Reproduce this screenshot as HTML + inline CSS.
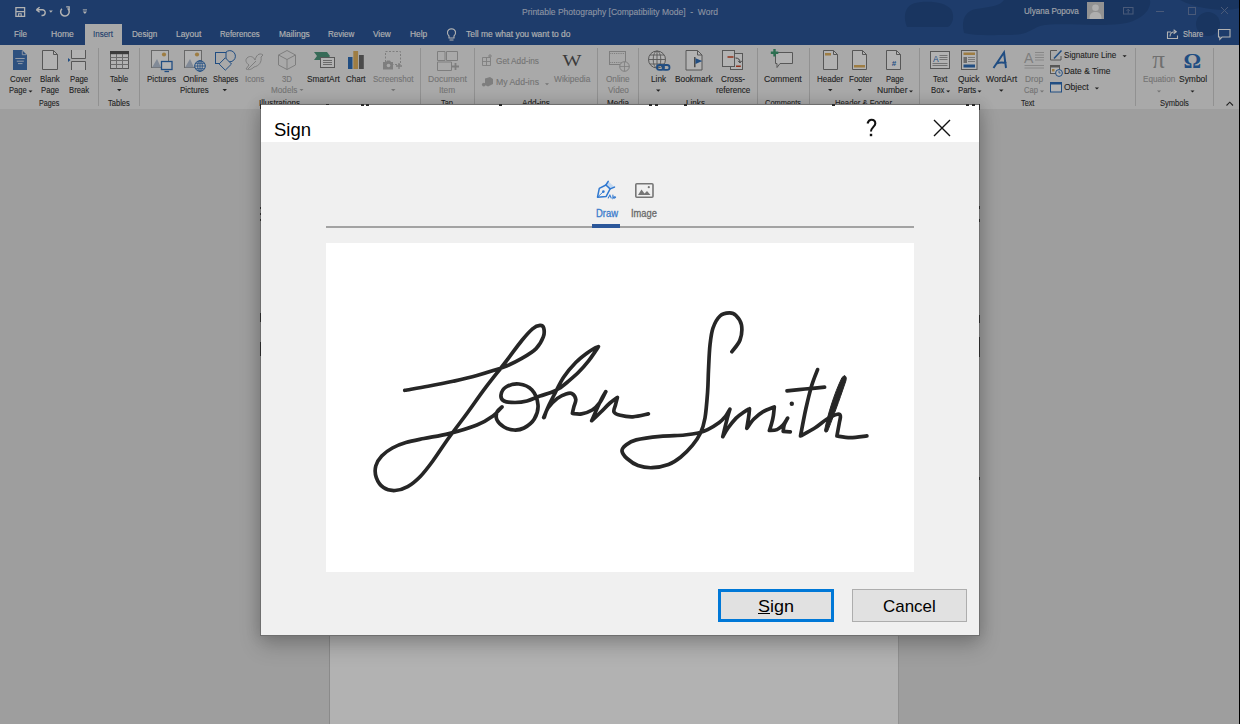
<!DOCTYPE html>
<html><head><meta charset="utf-8">
<style>
html,body{margin:0;padding:0;}
body{width:1240px;height:724px;overflow:hidden;position:relative;font-family:"Liberation Sans",sans-serif;background:#e6e6e6;}
.t{position:absolute;white-space:pre;transform-origin:0 0;}
.app .t{-webkit-text-stroke:0.1px currentColor;}
.mk{position:absolute;background:#2a2a2a;}
.a{position:absolute;}
#titlebar{position:absolute;left:0;top:0;width:1240px;height:45px;background:#2b579a;overflow:hidden;}
#ribbon{position:absolute;left:0;top:45px;width:1240px;height:64px;background:#f3f3f3;}
#tabsel{position:absolute;left:85px;top:24px;width:37px;height:21px;background:#f3f3f3;}
.sep{position:absolute;top:48px;width:1px;height:58px;background:#d0d0d0;}
#doc{position:absolute;left:0;top:109px;width:1240px;height:615px;background:#e3e3e3;}
#page{position:absolute;left:329px;top:109px;width:568px;height:615px;background:#ffffff;border-left:1px solid #c6c6c6;border-right:1px solid #d0d0d0;}
#dim{position:absolute;left:0;top:0;width:1240px;height:724px;background:rgba(0,0,0,0.3);}
#dlg{position:absolute;left:260px;top:104px;width:718px;height:530px;border:1px solid #6f6f6f;background:#f0f0f0;box-shadow:0 0 14px rgba(0,0,0,0.16), 0 10px 20px rgba(0,0,0,0.2);}
#dlgtitle{position:absolute;left:0;top:0;width:718px;height:37px;background:#ffffff;}
.tri{position:absolute;width:0;height:0;border-left:2.5px solid transparent;border-right:2.5px solid transparent;border-top:3px solid #444;}
</style></head><body>
<div id="doc"></div>
<div id="page"></div>
<div id="titlebar">
<svg class="a" style="left:0;top:0" width="1240" height="45" viewBox="0 0 1240 45"><g fill="rgba(0,12,40,0.14)"><path d="M907 27 C903 18 904 6 915 3 C928 0 945 2 951 9 C955 16 953 24 948 27z"/><path d="M964 33 C961 22 964 11 976 9 C990 7 1000 6 1004 0 H1150 C1152 10 1140 22 1120 24 C1090 27 1060 22 1040 26 C1030 30 1027 35 1010 35 C990 35 975 36 964 33z"/><circle cx="1208" cy="24" r="12"/><path d="M1180 0 H1240 V8 C1225 12 1200 10 1180 0z"/></g></svg>
</div>
<div id="tabsel"></div>
<div id="ribbon"></div>
<div class="sep" style="left:98px"></div><div class="sep" style="left:139px"></div><div class="sep" style="left:420px"></div><div class="sep" style="left:474px"></div><div class="sep" style="left:597px"></div><div class="sep" style="left:638px"></div><div class="sep" style="left:757px"></div><div class="sep" style="left:809px"></div><div class="sep" style="left:919px"></div><div class="sep" style="left:1135px"></div><div class="sep" style="left:1213px"></div><svg class="a" style="left:0;top:0" width="1240" height="120" viewBox="0 0 1240 120"><path d="M15.9 7.6 H24.6 V16.4 H15.9z M15.9 11.6 H24.6" fill="none" stroke="#ffffff" stroke-width="1.3"/><path d="M18.6 16.4 V13.8 H21.2 V16.4" fill="none" stroke="#ffffff" stroke-width="1.1"/><path d="M36.3 9.7 L39.6 7.2 M36.3 9.7 L39.6 12.3 M36.3 9.7 H42.3 A2.9 2.9 0 0 1 42.3 15.5 H41.5" fill="none" stroke="#ffffff" stroke-width="1.4"/><path d="M49 10.6 h3.8 l-1.9 2.2z" fill="#ffffff"/><path d="M67.6 8.4 A4.3 4.3 0 1 1 61.9 8.7" fill="none" stroke="#ffffff" stroke-width="1.5"/><path d="M66.2 6.8 H69.2 V10.2" fill="none" stroke="#ffffff" stroke-width="1.2"/><path d="M82.8 9.9 h4.2" stroke="#ffffff" stroke-width="1"/><path d="M82.8 11.6 h4.2 l-2.1 2.3z" fill="#ffffff"/><rect x="1087" y="2" width="17" height="17" fill="#d2d2d2"/><circle cx="1095.5" cy="7.8" r="3.3" fill="#fbfbfb"/><path d="M1089.5 19 C1089.5 13.5 1092 12 1095.5 12 C1099 12 1101.5 13.5 1101.5 19z" fill="#fbfbfb"/><rect x="1123.5" y="7.5" width="9.5" height="6.5" fill="none" stroke="#6a82ae" stroke-width="1"/><path d="M1128.2 13.5 v-4 M1126.6 10.8 l1.6 -1.6 l1.6 1.6" fill="none" stroke="#6a82ae" stroke-width="1"/><path d="M1156 11.5 h8" stroke="#6a82ae" stroke-width="1"/><rect x="1188.5" y="7.5" width="7" height="7" fill="none" stroke="#6a82ae" stroke-width="1"/><path d="M1221 7 L1228 14 M1228 7 L1221 14" stroke="#6a82ae" stroke-width="1"/><path d="M1171 32 H1167.5 V38.5 H1177.5 V35.5" fill="none" stroke="#ffffff" stroke-width="1.1"/><path d="M1170 36.5 C1170 33 1172 31.8 1175.5 31.8 M1173.6 29.8 L1176.3 31.8 L1173.6 33.9" fill="none" stroke="#ffffff" stroke-width="1.1"/><path d="M1218.5 29.5 H1230 V37 H1222 L1219.8 39.3 V37 H1218.5z" fill="none" stroke="#ffffff" stroke-width="1.1"/><path d="M449 36 C446.5 33.5 446.8 29 451.5 28.7 C456.2 29 456.5 33.5 454 36 V38 H449z M449.5 40 h4" fill="none" stroke="#ffffff" stroke-width="1.1"/><path d="M13 50 H22 L27 55 V70 H13z" fill="#4375b6"/><path d="M22.3 50.8 V54.7 H26.2" fill="none" stroke="#d6e0ee" stroke-width="0.9"/><path d="M15.3 58.5 h9.4 M16.8 61.2 h7 M18 63.6 h4.5" stroke="#e3ebf6" stroke-width="0.9"/><path d="M42.5 50.5 H53.5 L57.5 54.5 V69.5 H42.5z" fill="#fff" stroke="#7d7d7d" stroke-width="1"/><path d="M53.5 50.5 V54.5 H57.5" fill="none" stroke="#7d7d7d" stroke-width="1"/><path d="M71.5 50 V58.5 H85.5 V50 M71.5 70 V61.5 H85.5 V70" fill="#fff" stroke="#7d7d7d" stroke-width="1"/><path d="M68 58 L70.5 60 L68 62z" fill="#2f6fba"/><rect x="110.5" y="51.5" width="18" height="17" fill="#fff" stroke="#7d7d7d" stroke-width="1"/><rect x="110" y="51" width="19" height="3.2" fill="#555"/><path d="M110.5 57.5 h18 M110.5 60.5 h18 M110.5 64.5 h18 M116.5 54 v14.5 M122.5 54 v14.5" stroke="#9a9a9a" stroke-width="1"/><path d="M117 89 h4.5 l-2.25 2.2z" fill="#303030"/><rect x="151.5" y="50.5" width="17" height="17" fill="#fff" stroke="#959595" stroke-width="1"/><circle cx="164" cy="54.5" r="2.1" fill="#e3b461"/><path d="M152 67.5 L157 59 L161 67.5z" fill="#b9c6d8"/><rect x="161.5" y="61.5" width="10.5" height="8" fill="#fff" stroke="#2f6fba" stroke-width="1.3"/><path d="M164.5 71.5 h4.5" stroke="#2f6fba" stroke-width="1.3"/><rect x="184.5" y="50.5" width="17" height="17" fill="#fff" stroke="#959595" stroke-width="1"/><circle cx="197" cy="54.5" r="2.1" fill="#e3b461"/><path d="M185 67.5 L190 59 L194 67.5z" fill="#b9c6d8"/><circle cx="200" cy="66" r="5.3" fill="#fff" stroke="#2f6fba" stroke-width="1"/><path d="M194.7 66 h10.6 M200 60.7 v10.6 M195.5 63.3 h9 M195.5 68.7 h9" stroke="#2f6fba" stroke-width="0.8" fill="none"/><ellipse cx="200" cy="66" rx="2.3" ry="5.3" fill="none" stroke="#2f6fba" stroke-width="0.8"/><circle cx="229.8" cy="56.2" r="5.6" fill="none" stroke="#2f6fba" stroke-width="1"/><rect x="215.5" y="52.5" width="10.5" height="11" fill="#f3f3f3" stroke="#2f6fba" stroke-width="1"/><path d="M225.3 57.8 L231.5 64 L225.3 70.2 L219.1 64z" fill="#f3f3f3" stroke="#2f6fba" stroke-width="1"/><path d="M222.5 89 h4.5 l-2.25 2.2z" fill="#303030"/><path d="M247 58 C250 55 254 57 255 60 C256 56 259 52 263 55 L261 57 C262 62 259 66 254 67 C251 70 248 70 246 69 L249 65 C246 63 245 60 247 58z" fill="none" stroke="#b5b5b5" stroke-width="1"/><path d="M248 69 L256 61" stroke="#b5b5b5" stroke-width="1"/><path d="M287 50.5 L295.5 55 V65 L287 69.5 L278.5 65 V55z M278.5 55 L287 59.5 L295.5 55 M287 59.5 V69.5" fill="none" stroke="#b5b5b5" stroke-width="1"/><path d="M299.5 89 h4 l-2 2z" fill="#a6a6a6"/><path d="M314 52 H327 L330 56 L327 60 H314 L317 56z" fill="#4f9a7e"/><rect x="320.5" y="57.5" width="14" height="10" fill="#fff" stroke="#7d7d7d" stroke-width="1"/><path d="M323 60.5 h9 M323 62.5 h9 M323 64.5 h9" stroke="#7d7d7d" stroke-width="0.8"/><rect x="348" y="57" width="4.5" height="12" fill="#2f6fba"/><rect x="353.3" y="51" width="4.8" height="18" fill="#e3b461"/><rect x="359" y="55" width="4.8" height="14" fill="#6b6b6b"/><rect x="385.5" y="51.5" width="15" height="13" fill="none" stroke="#b5b5b5" stroke-width="1" stroke-dasharray="2 1.5"/><path d="M383 62 h3 l1-1.5 h3 l1 1.5 h2 v7.5 h-10z" fill="#b5b5b5"/><circle cx="388.5" cy="65.5" r="1.8" fill="#f3f3f3"/><path d="M396 66 h6 M399 63 v6" stroke="#b5b5b5" stroke-width="1.3"/><path d="M391 89 h4.5 l-2.25 2.2z" fill="#a6a6a6"/><path d="M437.5 51.5 h7.5 v9 h-7.5z M446.5 51.5 h11 v9 h-11z M437.5 62 h14 v8.5 h-14z" fill="none" stroke="#b5b5b5" stroke-width="1"/><path d="M452 66.5 h7 M455.5 63 v7" stroke="#b5b5b5" stroke-width="1.8"/><path d="M482.5 57.5 h8 v8 h-8z M486.5 57.5 v8 M482.5 61.5 h8" fill="none" stroke="#b5b5b5" stroke-width="0.9"/><path d="M490 54 v4 M488 56 h4" stroke="#b5b5b5" stroke-width="0.9"/><path d="M485 78.5 L490 77 L493 79 V84 L488 86.5 L485 85z" fill="#b5b5b5"/><circle cx="483.8" cy="84.6" r="1.9" fill="#b5b5b5"/><path d="M545 83.2 h4 l-2 2z" fill="#a6a6a6"/><text x="572" y="66" font-family="Liberation Serif" font-size="17" fill="#555" text-anchor="middle" transform="translate(572 0) scale(1.18 1) translate(-572 0)">W</text><rect x="609.5" y="51.5" width="16" height="13" fill="none" stroke="#b5b5b5" stroke-width="1"/><path d="M609.5 53.5 h16 M609.5 62.5 h16" stroke="#b5b5b5" stroke-width="1" stroke-dasharray="1.2 1"/><circle cx="624.5" cy="66.5" r="4.8" fill="#f3f3f3" stroke="#b5b5b5" stroke-width="1"/><path d="M619.7 66.5 h9.6 M624.5 61.7 v9.6" stroke="#b5b5b5" stroke-width="0.8"/><circle cx="657" cy="59.5" r="8.5" fill="#fff" stroke="#7d7d7d" stroke-width="1"/><ellipse cx="657" cy="59.5" rx="3.8" ry="8.5" fill="none" stroke="#7d7d7d" stroke-width="0.9"/><path d="M648.5 59.5 h17 M650 55 h14 M650 64 h14 M657 51 v17" stroke="#7d7d7d" stroke-width="0.9"/><rect x="657" y="65" width="7" height="4.8" rx="2.4" fill="none" stroke="#2f6fba" stroke-width="1.8"/><rect x="662.5" y="65" width="7" height="4.8" rx="2.4" fill="none" stroke="#2f6fba" stroke-width="1.8"/><path d="M656 89.5 h4.5 l-2.25 2.2z" fill="#303030"/><path d="M686 50.5 H697.5 L702 55 V70 H686z" fill="#fff" stroke="#7d7d7d" stroke-width="1"/><path d="M697.5 50.5 V55 H702" fill="none" stroke="#7d7d7d" stroke-width="1"/><path d="M694.8 57 V67.3" stroke="#555" stroke-width="1.3"/><path d="M695.5 58.2 L702.3 61.1 L695.5 64z" fill="#2f6fba"/><rect x="730.5" y="53.5" width="12" height="16" fill="#fff" stroke="#7d7d7d" stroke-width="1"/><rect x="722.5" y="50.5" width="12" height="16" fill="#fff" stroke="#7d7d7d" stroke-width="1"/><path d="M727.5 57 h6 M736 66.2 h4.8" stroke="#d24726" stroke-width="1.6"/><path d="M735.5 58 C738.5 58 740 59.5 740 62.5 M738.2 60.8 L740 62.8 L741.8 60.8" fill="none" stroke="#555" stroke-width="1"/><path d="M775.5 52.5 H792.5 V63.5 H780 L777 67.5 V63.5 H775.5z" fill="#fff" stroke="#7d7d7d" stroke-width="1"/><path d="M774.5 49 v7.5 M770.8 52.7 h7.5" stroke="#3f9f74" stroke-width="2.4"/><path d="M823.5 50.5 H833.5 L837.5 54.5 V69.5 H823.5z" fill="#fff" stroke="#7d7d7d" stroke-width="1"/><path d="M833.5 50.5 V54.5 H837.5" fill="none" stroke="#7d7d7d" stroke-width="1"/><rect x="825" y="53" width="6" height="2.5" fill="#e3b461"/><path d="M828 89 h4.5 l-2.25 2.2z" fill="#303030"/><path d="M852.5 50.5 H862.5 L866.5 54.5 V69.5 H852.5z" fill="#fff" stroke="#7d7d7d" stroke-width="1"/><path d="M862.5 50.5 V54.5 H866.5" fill="none" stroke="#7d7d7d" stroke-width="1"/><rect x="854" y="65" width="11" height="2.5" fill="#e3b461"/><path d="M857.5 89 h4.5 l-2.25 2.2z" fill="#303030"/><path d="M886.5 50.5 H896.5 L900.5 54.5 V69.5 H886.5z" fill="#fff" stroke="#7d7d7d" stroke-width="1"/><path d="M896.5 50.5 V54.5 H900.5" fill="none" stroke="#7d7d7d" stroke-width="1"/><text x="894" y="66" font-family="Liberation Sans" font-size="8" font-weight="bold" fill="#2f6fba" text-anchor="middle">#</text><path d="M909 90.5 h4 l-2 2z" fill="#303030"/><rect x="930.5" y="51.5" width="19" height="17" fill="#fff" stroke="#7d7d7d" stroke-width="1"/><text x="933" y="61.5" font-family="Liberation Sans" font-size="8.5" fill="#2f6fba">A</text><path d="M939.5 55.5 h8 M939.5 57.5 h8 M939.5 59.5 h8 M932.5 63.5 h15 M932.5 65.5 h15" stroke="#7d7d7d" stroke-width="0.7"/><path d="M946.2 90.5 h4 l-2 2z" fill="#303030"/><rect x="961.5" y="50.5" width="15.5" height="19" fill="#fff" stroke="#7d7d7d" stroke-width="1"/><rect x="963.5" y="52.5" width="11.5" height="2.5" fill="#e3b461"/><rect x="963.5" y="57" width="3.5" height="6" fill="#9a9a9a"/><path d="M968 57.5 h7 M968 59.5 h7 M968 61.5 h7" stroke="#9a9a9a" stroke-width="0.8"/><rect x="963.5" y="64.5" width="11.5" height="3" fill="#2f6fba"/><path d="M977.5 90.5 h4 l-2 2z" fill="#303030"/><path d="M993.5 68 L1004 52.5 L1006 68 M996.5 63.5 C1000 62 1003 62.5 1006.5 63" fill="none" stroke="#2f6fba" stroke-width="2"/><path d="M999 89.5 h4.5 l-2.25 2.2z" fill="#303030"/><text x="1024" y="63" font-family="Liberation Sans" font-size="14" fill="#b5b5b5">A</text><path d="M1035 52.5 h9 M1035 55 h9 M1035 57.5 h9 M1035 60 h9 M1024.5 65.5 h19.5 M1024.5 68 h19.5" stroke="#b5b5b5" stroke-width="0.8"/><path d="M1040 90.5 h4 l-2 2z" fill="#a6a6a6"/><path d="M1050.5 50.5 H1057 M1050.5 50.5 V60 H1061 V56" fill="none" stroke="#7d7d7d" stroke-width="1"/><path d="M1054 58.5 L1061.5 50.5" stroke="#2f6fba" stroke-width="1.6"/><path d="M1122.5 55.2 h4.2 l-2.1 2.1z" fill="#303030"/><rect x="1050.5" y="65.5" width="9" height="8" fill="#fff" stroke="#7d7d7d" stroke-width="1"/><rect x="1050.5" y="65.5" width="9" height="2" fill="#7d7d7d"/><rect x="1052" y="69" width="2.5" height="2.5" fill="#e3b461"/><circle cx="1059" cy="73" r="3.4" fill="#fff" stroke="#2f6fba" stroke-width="1"/><path d="M1059 71 v2 h1.6" fill="none" stroke="#2f6fba" stroke-width="0.8"/><rect x="1050.5" y="82.5" width="11" height="9.5" fill="#fff" stroke="#2f6fba" stroke-width="1"/><rect x="1050.5" y="82.5" width="11" height="2" fill="#2f6fba"/><path d="M1094.8 87.5 h4.2 l-2.1 2.1z" fill="#303030"/><text x="1158.5" y="68" font-family="Liberation Serif" font-size="25" fill="#a0a0a0" text-anchor="middle">π</text><text x="1192.3" y="68" font-family="Liberation Serif" font-size="22" font-weight="bold" fill="#2f6fba" text-anchor="middle">Ω</text><path d="M1157 90.5 h4 l-2 2z" fill="#a6a6a6"/><path d="M1190.5 90.5 h4 l-2 2z" fill="#303030"/><path d="M1226.5 105.5 L1229.8 102.2 L1233 105.5" fill="none" stroke="#303030" stroke-width="1.1"/><path d="M28.5 90.5 h4 l-2 2z" fill="#303030"/></svg>
<div class="app"><div class="t" style="left:521.5px;top:7.68px;font-size:9px;line-height:9px;color:#c9d3e6;transform:scaleX(0.945);">Printable Photography [Compatibility Mode]  -  Word</div>
<div class="t" style="left:1024.2px;top:6.68px;font-size:9px;line-height:9px;color:#e8ecf4;transform:scaleX(0.898);">Ulyana Popova</div>
<div class="t" style="left:14.2px;top:30.10px;font-size:8.5px;line-height:8.5px;color:#ffffff;transform:scaleX(0.941);">File</div>
<div class="t" style="left:51.4px;top:30.10px;font-size:8.5px;line-height:8.5px;color:#ffffff;transform:scaleX(1.005);">Home</div>
<div class="t" style="left:92.9px;top:30.10px;font-size:8.5px;line-height:8.5px;color:#2b579a;transform:scaleX(0.940);">Insert</div>
<div class="t" style="left:131.9px;top:30.10px;font-size:8.5px;line-height:8.5px;color:#ffffff;transform:scaleX(0.956);">Design</div>
<div class="t" style="left:175.8px;top:30.10px;font-size:8.5px;line-height:8.5px;color:#ffffff;transform:scaleX(0.991);">Layout</div>
<div class="t" style="left:220.0px;top:30.10px;font-size:8.5px;line-height:8.5px;color:#ffffff;transform:scaleX(0.911);">References</div>
<div class="t" style="left:278.9px;top:30.10px;font-size:8.5px;line-height:8.5px;color:#ffffff;transform:scaleX(0.988);">Mailings</div>
<div class="t" style="left:328.4px;top:30.10px;font-size:8.5px;line-height:8.5px;color:#ffffff;transform:scaleX(0.943);">Review</div>
<div class="t" style="left:373.0px;top:30.10px;font-size:8.5px;line-height:8.5px;color:#ffffff;transform:scaleX(0.974);">View</div>
<div class="t" style="left:409.7px;top:30.10px;font-size:8.5px;line-height:8.5px;color:#ffffff;transform:scaleX(0.989);">Help</div>
<div class="t" style="left:465.7px;top:30.10px;font-size:8.5px;line-height:8.5px;color:#ffffff;transform:scaleX(0.996);">Tell me what you want to do</div>
<div class="t" style="left:1183.0px;top:30.10px;font-size:8.5px;line-height:8.5px;color:#ffffff;transform:scaleX(0.890);">Share</div>
<div class="t" style="left:9.6px;top:74.94px;font-size:8.7px;line-height:8.7px;color:#303030;transform:scaleX(0.910);">Cover</div>
<div class="t" style="left:8.8px;top:85.94px;font-size:8.7px;line-height:8.7px;color:#303030;transform:scaleX(0.872);">Page</div>
<div class="t" style="left:39.5px;top:74.94px;font-size:8.7px;line-height:8.7px;color:#303030;transform:scaleX(0.911);">Blank</div>
<div class="t" style="left:40.6px;top:85.94px;font-size:8.7px;line-height:8.7px;color:#303030;transform:scaleX(0.892);">Page</div>
<div class="t" style="left:70.0px;top:74.94px;font-size:8.7px;line-height:8.7px;color:#303030;transform:scaleX(0.892);">Page</div>
<div class="t" style="left:68.9px;top:85.94px;font-size:8.7px;line-height:8.7px;color:#303030;transform:scaleX(0.885);">Break</div>
<div class="t" style="left:110.4px;top:74.94px;font-size:8.7px;line-height:8.7px;color:#303030;transform:scaleX(0.871);">Table</div>
<div class="t" style="left:39.0px;top:98.94px;font-size:8.7px;line-height:8.7px;color:#303030;transform:scaleX(0.824);">Pages</div>
<div class="t" style="left:107.8px;top:98.94px;font-size:8.7px;line-height:8.7px;color:#303030;transform:scaleX(0.868);">Tables</div>
<div class="t" style="left:146.8px;top:74.94px;font-size:8.7px;line-height:8.7px;color:#303030;transform:scaleX(0.924);">Pictures</div>
<div class="t" style="left:182.6px;top:74.94px;font-size:8.7px;line-height:8.7px;color:#303030;transform:scaleX(0.963);">Online</div>
<div class="t" style="left:179.7px;top:85.94px;font-size:8.7px;line-height:8.7px;color:#303030;transform:scaleX(0.917);">Pictures</div>
<div class="t" style="left:212.6px;top:74.94px;font-size:8.7px;line-height:8.7px;color:#303030;transform:scaleX(0.852);">Shapes</div>
<div class="t" style="left:244.8px;top:74.94px;font-size:8.7px;line-height:8.7px;color:#a6a6a6;transform:scaleX(0.934);">Icons</div>
<div class="t" style="left:282.0px;top:74.94px;font-size:8.7px;line-height:8.7px;color:#a6a6a6;transform:scaleX(0.900);">3D</div>
<div class="t" style="left:271.3px;top:85.94px;font-size:8.7px;line-height:8.7px;color:#a6a6a6;transform:scaleX(0.942);">Models</div>
<div class="t" style="left:307.0px;top:74.94px;font-size:8.7px;line-height:8.7px;color:#303030;transform:scaleX(0.954);">SmartArt</div>
<div class="t" style="left:346.4px;top:74.94px;font-size:8.7px;line-height:8.7px;color:#303030;transform:scaleX(0.922);">Chart</div>
<div class="t" style="left:372.6px;top:74.94px;font-size:8.7px;line-height:8.7px;color:#a6a6a6;transform:scaleX(0.919);">Screenshot</div>
<div class="t" style="left:259.0px;top:98.94px;font-size:8.7px;line-height:8.7px;color:#303030;transform:scaleX(0.933);">Illustrations</div>
<div class="t" style="left:428.0px;top:74.94px;font-size:8.7px;line-height:8.7px;color:#a6a6a6;transform:scaleX(0.980);">Document</div>
<div class="t" style="left:438.8px;top:85.94px;font-size:8.7px;line-height:8.7px;color:#a6a6a6;transform:scaleX(0.958);">Item</div>
<div class="t" style="left:441.0px;top:98.94px;font-size:8.7px;line-height:8.7px;color:#303030;transform:scaleX(0.856);">Tap</div>
<div class="t" style="left:496.0px;top:56.94px;font-size:8.7px;line-height:8.7px;color:#a6a6a6;transform:scaleX(0.947);">Get Add-ins</div>
<div class="t" style="left:496.0px;top:77.94px;font-size:8.7px;line-height:8.7px;color:#a6a6a6;transform:scaleX(1.000);">My Add-ins</div>
<div class="t" style="left:553.7px;top:74.94px;font-size:8.7px;line-height:8.7px;color:#a6a6a6;transform:scaleX(0.964);">Wikipedia</div>
<div class="t" style="left:522.0px;top:98.94px;font-size:8.7px;line-height:8.7px;color:#303030;transform:scaleX(0.950);">Add-ins</div>
<div class="t" style="left:606.0px;top:74.94px;font-size:8.7px;line-height:8.7px;color:#a6a6a6;transform:scaleX(0.943);">Online</div>
<div class="t" style="left:607.7px;top:85.94px;font-size:8.7px;line-height:8.7px;color:#a6a6a6;transform:scaleX(0.943);">Video</div>
<div class="t" style="left:607.0px;top:98.94px;font-size:8.7px;line-height:8.7px;color:#303030;transform:scaleX(0.929);">Media</div>
<div class="t" style="left:650.9px;top:74.94px;font-size:8.7px;line-height:8.7px;color:#303030;transform:scaleX(0.947);">Link</div>
<div class="t" style="left:674.6px;top:74.94px;font-size:8.7px;line-height:8.7px;color:#303030;transform:scaleX(0.961);">Bookmark</div>
<div class="t" style="left:721.0px;top:74.94px;font-size:8.7px;line-height:8.7px;color:#303030;transform:scaleX(0.938);">Cross-</div>
<div class="t" style="left:715.6px;top:85.94px;font-size:8.7px;line-height:8.7px;color:#303030;transform:scaleX(0.937);">reference</div>
<div class="t" style="left:686.0px;top:98.94px;font-size:8.7px;line-height:8.7px;color:#303030;transform:scaleX(0.937);">Links</div>
<div class="t" style="left:764.3px;top:74.94px;font-size:8.7px;line-height:8.7px;color:#303030;transform:scaleX(1.001);">Comment</div>
<div class="t" style="left:765.0px;top:98.94px;font-size:8.7px;line-height:8.7px;color:#303030;transform:scaleX(0.857);">Comments</div>
<div class="t" style="left:817.0px;top:74.94px;font-size:8.7px;line-height:8.7px;color:#303030;transform:scaleX(0.919);">Header</div>
<div class="t" style="left:848.8px;top:74.94px;font-size:8.7px;line-height:8.7px;color:#303030;transform:scaleX(0.924);">Footer</div>
<div class="t" style="left:885.5px;top:74.94px;font-size:8.7px;line-height:8.7px;color:#303030;transform:scaleX(0.877);">Page</div>
<div class="t" style="left:876.5px;top:85.94px;font-size:8.7px;line-height:8.7px;color:#303030;transform:scaleX(0.987);">Number</div>
<div class="t" style="left:835.0px;top:98.94px;font-size:8.7px;line-height:8.7px;color:#303030;transform:scaleX(0.887);">Header & Footer</div>
<div class="t" style="left:933.0px;top:74.94px;font-size:8.7px;line-height:8.7px;color:#303030;transform:scaleX(0.897);">Text</div>
<div class="t" style="left:930.7px;top:85.94px;font-size:8.7px;line-height:8.7px;color:#303030;transform:scaleX(0.888);">Box</div>
<div class="t" style="left:958.3px;top:74.94px;font-size:8.7px;line-height:8.7px;color:#303030;transform:scaleX(0.968);">Quick</div>
<div class="t" style="left:957.8px;top:85.94px;font-size:8.7px;line-height:8.7px;color:#303030;transform:scaleX(0.902);">Parts</div>
<div class="t" style="left:985.5px;top:74.94px;font-size:8.7px;line-height:8.7px;color:#303030;transform:scaleX(0.981);">WordArt</div>
<div class="t" style="left:1024.7px;top:74.94px;font-size:8.7px;line-height:8.7px;color:#a6a6a6;transform:scaleX(0.961);">Drop</div>
<div class="t" style="left:1023.9px;top:85.94px;font-size:8.7px;line-height:8.7px;color:#a6a6a6;transform:scaleX(0.872);">Cap</div>
<div class="t" style="left:1063.6px;top:50.94px;font-size:8.7px;line-height:8.7px;color:#303030;transform:scaleX(0.935);">Signature Line</div>
<div class="t" style="left:1063.6px;top:66.94px;font-size:8.7px;line-height:8.7px;color:#303030;transform:scaleX(0.970);">Date &amp; Time</div>
<div class="t" style="left:1063.6px;top:82.94px;font-size:8.7px;line-height:8.7px;color:#303030;transform:scaleX(0.980);">Object</div>
<div class="t" style="left:1020.6px;top:98.94px;font-size:8.7px;line-height:8.7px;color:#303030;transform:scaleX(0.841);">Text</div>
<div class="t" style="left:1142.8px;top:74.94px;font-size:8.7px;line-height:8.7px;color:#a6a6a6;transform:scaleX(0.939);">Equation</div>
<div class="t" style="left:1178.5px;top:74.94px;font-size:8.7px;line-height:8.7px;color:#303030;transform:scaleX(0.973);">Symbol</div>
<div class="t" style="left:1160.4px;top:98.94px;font-size:8.7px;line-height:8.7px;color:#303030;transform:scaleX(0.865);">Symbols</div></div>
<div id="dim"></div>
<div id="dlg"><div id="dlgtitle"></div></div>
<svg class="a" style="left:0;top:0" width="1240" height="724" viewBox="0 0 1240 724"><path d="M608.2 181.3 L614.5 187.1 L610.2 188.9 L605.9 185z" fill="#c3d8f0"/><path d="M608.2 181.3 L605.9 185 M614.5 187.1 L610.1 188.9" stroke="#2f78d0" stroke-width="1.5" stroke-linecap="round"/><path d="M605.9 185 L599.3 188.4 L597.5 197.2 L606.2 196.4 L610.1 188.9 Z" fill="none" stroke="#2f78d0" stroke-width="1.5" stroke-linejoin="round"/><path d="M598 196.7 L603.2 191.8" stroke="#2f78d0" stroke-width="0.9"/><circle cx="603.4" cy="191.6" r="1.3" fill="#2f78d0"/><path d="M608.2 198 L609.9 195.1 L611.2 198 M612.9 194.9 L612.9 198 C614 196.4 615.4 196.4 615.6 197.2 C615.4 198.2 614 198.3 613.2 197.8" fill="none" stroke="#2f78d0" stroke-width="1.05" stroke-linecap="round"/><rect x="635.8" y="183.8" width="17.2" height="13.4" rx="1" fill="none" stroke="#767676" stroke-width="1.6"/><path d="M638 195 L641.5 189.5 L644.5 193.5 L647 191 L650.5 195z" fill="#767676"/><circle cx="648.8" cy="187.2" r="1.1" fill="#767676"/></svg><div class="a" style="left:326px;top:226px;width:588px;height:2px;background:#a3a3a3"></div><div class="a" style="left:592px;top:224px;width:28px;height:4px;background:#2b579a"></div><div class="a" style="left:326px;top:243px;width:588px;height:329px;background:#ffffff"></div><div class="a" style="left:718px;top:589px;width:110px;height:27px;border:3px solid #0078d7;background:#e1e1e1"></div><div class="a" style="left:852px;top:589px;width:113px;height:31px;border:1px solid #adadad;background:#e1e1e1"></div><svg class="a" style="left:0;top:0" width="1240" height="724" viewBox="0 0 1240 724"><path d="M867.5 123.5 C868.5 120.5 870.5 119.8 871.5 119.8 C874 119.8 875.3 121.5 875.3 123.5 C875.3 126.5 871 127.5 871 131.5" fill="none" stroke="#111" stroke-width="2.1"/><rect x="869.8" y="133.8" width="2.4" height="2.4" fill="#111"/><path d="M934 120 L950 136 M950 120 L934 136" stroke="#111" stroke-width="1.4"/></svg>
<svg class="a" style="left:0;top:0" width="1240" height="724" viewBox="0 0 1240 724"><g fill="none" stroke="#262626" stroke-width="3.7" stroke-linecap="round" stroke-linejoin="round"><path d="M404.8 390.3 C408.7 389.6 420.0 387.8 428.0 386.3 C436.0 384.8 444.9 383.1 453.0 381.3 C461.1 379.5 468.4 377.9 476.9 375.5 C485.4 373.1 496.3 370.0 503.8 367.1 C511.3 364.2 516.4 361.5 521.8 358.4 C527.2 355.3 532.5 352.2 536.1 348.6 C539.7 345.0 542.0 340.3 543.3 336.9 C544.6 333.5 544.2 329.9 543.7 328.0 C543.2 326.1 541.9 325.2 540.0 325.3 C538.1 325.4 535.5 326.3 532.5 328.8 C529.5 331.3 526.3 335.0 521.8 340.5 C517.3 346.0 511.6 354.2 505.6 362.0 C499.6 369.8 492.2 378.9 485.9 387.2 C479.6 395.5 474.1 403.6 468.0 412.0 C461.9 420.4 454.9 429.3 449.0 437.5 C443.1 445.7 437.6 454.5 432.8 461.0 C428.0 467.5 424.5 472.2 420.3 476.5 C416.1 480.8 411.9 484.3 407.7 486.6 C403.5 488.9 399.1 490.3 395.1 490.5 C391.1 490.7 386.6 489.8 383.5 487.6 C380.4 485.5 377.6 481.2 376.3 477.6 C375.0 474.0 374.9 469.5 375.8 465.9 C376.7 462.3 378.9 459.0 381.7 456.0 C384.5 453.0 388.4 450.2 392.4 448.0 C396.4 445.8 400.6 444.2 405.9 442.6 C411.1 441.0 416.7 440.0 423.9 438.5 C431.1 437.0 440.2 435.9 449.0 433.6 C457.8 431.4 469.6 427.9 476.9 425.0 C484.2 422.1 488.8 418.9 493.0 415.9 C497.2 412.9 500.5 408.4 502.0 406.9 L502.0 406.9 C501.2 407.8 497.8 409.8 497.0 412.0 C496.2 414.2 495.8 417.5 497.0 420.0 C498.2 422.5 501.2 425.3 504.0 427.0 C506.8 428.7 510.7 429.8 514.0 430.0 C517.3 430.2 520.6 429.8 524.0 428.0 C527.4 426.2 532.0 422.8 534.3 419.0 C536.6 415.2 538.4 409.8 538.0 405.0 C537.6 400.2 535.2 393.5 532.0 390.0 C528.8 386.5 523.3 384.5 519.0 384.0 C514.7 383.5 509.0 385.2 506.0 387.0 C503.0 388.8 501.3 392.7 501.0 395.0 C500.7 397.3 501.7 399.8 504.0 401.0 C506.3 402.2 511.2 402.5 515.0 402.5 C518.8 402.5 522.8 402.1 527.0 401.0 C531.2 399.9 536.0 397.4 540.0 396.0 C544.0 394.6 547.8 393.8 551.0 392.5 C554.2 391.2 556.3 390.2 559.0 388.5 C561.7 386.8 564.0 384.9 567.3 382.2 C570.5 379.5 575.0 375.8 578.5 372.3 C582.0 368.8 585.6 364.6 588.4 361.1 C591.2 357.6 593.8 353.5 595.5 351.1 C597.2 348.7 597.9 347.4 598.4 346.6 L598.4 346.6 C597.7 346.9 595.9 347.4 594.0 348.5 C592.1 349.6 590.2 350.7 587.2 353.0 C584.2 355.3 579.9 358.3 576.0 362.3 C572.1 366.3 567.1 372.0 563.6 377.2 C560.1 382.4 557.3 388.8 554.9 393.4 C552.5 398.0 550.9 401.0 549.0 405.0 C547.1 409.0 544.6 415.5 543.7 417.6 L544.3 417.3 C544.9 415.8 545.8 411.1 548.0 408.0 C550.2 404.9 554.4 400.7 557.4 398.4 C560.4 396.1 563.6 394.8 566.0 394.0 C568.4 393.2 570.4 392.7 572.0 393.6 C573.6 394.5 575.5 397.1 575.8 399.4 C576.1 401.6 574.4 404.8 573.8 407.1 C573.2 409.4 572.6 412.3 572.4 413.4 L572.4 413.4 C573.9 413.5 578.3 414.5 581.6 413.9 C584.9 413.3 589.1 411.9 592.2 410.0 C595.3 408.1 597.7 405.4 600.0 402.3 C602.3 399.2 604.8 393.4 605.8 391.6 L605.8 391.6 C605.0 393.1 603.2 395.5 600.9 400.3 C598.5 405.1 593.2 417.3 591.7 420.7 L591.7 420.7 C593.2 419.2 597.9 414.9 600.9 412.0 C603.9 409.1 607.2 405.4 610.0 403.0 C612.8 400.6 616.2 398.3 617.4 397.4 L617.4 397.4 C617.1 398.7 616.0 402.8 615.4 405.2 C614.8 407.6 613.2 410.3 614.0 412.0 C614.8 413.7 617.1 414.5 620.3 415.3 C623.4 416.1 628.2 417.0 632.9 416.8 C637.6 416.6 645.8 414.4 648.4 413.9"/><path d="M731.9 351.7 C733.2 349.8 738.4 344.4 740.0 340.0 C741.6 335.6 742.2 329.1 741.5 325.0 C740.8 320.9 738.0 317.5 736.0 315.5 C734.0 313.5 732.1 312.8 729.4 312.9 C726.7 313.0 722.7 313.5 720.0 316.0 C717.3 318.5 714.7 323.2 713.0 328.0 C711.3 332.8 710.8 338.0 710.0 345.0 C709.2 352.0 708.9 362.2 708.5 370.0 C708.1 377.8 708.2 384.0 707.6 392.0 C707.0 400.0 706.2 411.2 705.0 418.0 C703.8 424.8 702.6 428.5 700.5 433.0 C698.4 437.5 695.9 441.1 692.6 445.2 C689.3 449.2 684.5 454.1 680.5 457.3 C676.5 460.5 673.2 462.8 668.5 464.5 C663.8 466.2 657.4 467.5 652.3 467.7 C647.2 467.9 642.2 467.0 638.0 465.5 C633.8 464.0 629.7 460.9 627.0 458.5 C624.3 456.1 622.2 453.2 622.0 451.0 C621.8 448.8 623.6 446.9 626.0 445.0 C628.4 443.1 630.5 441.3 636.2 439.9 C641.9 438.4 652.3 437.1 660.4 436.3 C668.5 435.5 678.3 435.6 684.6 435.0 C690.9 434.4 694.4 433.9 698.3 433.0 C702.1 432.1 704.2 431.4 707.7 429.6 C711.2 427.9 716.3 424.7 719.3 422.5 C722.3 420.3 723.7 418.5 725.5 416.3 C727.3 414.1 729.2 410.4 729.9 409.2 L729.9 409.2 C729.5 410.7 728.5 413.5 727.3 418.1 C726.1 422.7 723.5 433.6 722.8 436.7 L722.8 436.7 C723.7 435.2 726.0 430.9 728.2 427.8 C730.4 424.7 733.5 420.8 736.1 418.1 C738.8 415.5 741.9 413.4 744.1 411.9 C746.3 410.3 748.6 409.3 749.5 408.8 L749.5 408.8 C749.4 410.2 749.1 413.9 748.6 417.2 C748.1 420.4 747.1 426.4 746.8 428.3 L746.8 428.3 C748.0 426.8 751.2 421.7 753.9 419.0 C756.6 416.3 759.4 413.9 762.8 411.9 C766.2 409.9 772.4 407.8 774.3 407.0 L774.3 407.0 C774.1 408.4 773.8 412.7 773.4 415.4 C773.0 418.1 772.3 420.9 771.6 423.4 C770.9 425.9 769.8 429.3 769.4 430.5 L769.4 430.5 C770.7 430.4 774.7 430.5 777.0 429.6 C779.3 428.7 781.2 426.9 783.0 425.0 C784.8 423.1 786.8 419.2 787.6 418.1 L787.6 418.1 C787.0 419.3 784.8 423.0 784.1 425.2 C783.4 427.4 783.4 430.4 783.2 431.4 L783.2 431.4 C784.4 431.5 789.1 431.7 790.3 431.8"/><path d="M817.6 369.6 C816.6 372.2 813.7 378.9 811.7 385.5 C809.7 392.1 807.7 400.6 805.8 409.0 C803.9 417.4 801.4 431.5 800.5 436.0 L800.5 436.0 C803.0 434.6 810.8 430.5 815.2 427.7 C819.6 424.9 823.3 421.2 827.0 419.0 C830.7 416.8 835.3 414.7 837.5 414.2 C839.7 413.7 840.1 414.5 840.4 416.0 C840.7 417.5 839.9 419.7 839.3 423.0 C838.7 426.3 837.3 433.8 836.9 436.0 L836.9 436.0 C839.1 436.3 845.4 437.7 850.4 437.7 C855.4 437.7 864.1 436.2 866.9 435.9"/><path d="M787.0 390.8 C790.0 390.5 798.7 389.6 805.0 389.0 C811.3 388.4 821.3 387.5 824.6 387.2"/></g><path d="M844.5 375.5 C846.5 376.5 846.8 378.5 845.5 382 C842 392 836 410 827.5 431.5 C826 432.5 824.5 432 824.5 430.5 C828 414 834 394 842 377.5z" fill="#262626" stroke="#262626" stroke-width="1"/><circle cx="791.8" cy="403.8" r="2.2" fill="#262626"/></svg>
<div class="t" style="left:274.0px;top:120.22px;font-size:19px;line-height:19px;color:#000000;transform:scaleX(0.973);">Sign</div>
<div class="t" style="left:596.0px;top:208.84px;font-size:10px;line-height:10px;color:#3b7dcc;transform:scaleX(0.942);-webkit-text-stroke:0.3px currentColor">Draw</div>
<div class="t" style="left:631.4px;top:208.84px;font-size:10px;line-height:10px;color:#6b6b6b;transform:scaleX(0.932);-webkit-text-stroke:0.3px currentColor">Image</div>
<div class="t" style="left:758.0px;top:597.91px;font-size:17px;line-height:17px;color:#000000;transform:scaleX(1.058);"><u>S</u>ign</div>
<div class="t" style="left:882.7px;top:597.91px;font-size:17px;line-height:17px;color:#000000;transform:scaleX(0.996);">Cancel</div>
<div class="mk" style="left:326px;top:104px;width:3px;height:1px"></div><div class="mk" style="left:361px;top:104px;width:3px;height:1.5px"></div><div class="mk" style="left:366px;top:104px;width:3px;height:1.5px"></div><div class="mk" style="left:499px;top:104px;width:3px;height:1.5px"></div><div class="mk" style="left:649px;top:104px;width:3px;height:1.5px"></div><div class="mk" style="left:655px;top:104px;width:3px;height:1.5px"></div><div class="mk" style="left:684px;top:104px;width:3px;height:1.5px"></div><div class="mk" style="left:832px;top:104px;width:3px;height:1.5px"></div><div class="mk" style="left:966px;top:104px;width:3px;height:1.5px"></div><div class="mk" style="left:972px;top:104px;width:3px;height:1.5px"></div><div class="mk" style="left:260px;top:207px;width:1px;height:2px"></div><div class="mk" style="left:260px;top:213px;width:1px;height:2px"></div><div class="mk" style="left:260px;top:219px;width:1px;height:2px"></div><div class="mk" style="left:260px;top:313px;width:1px;height:9px"></div><div class="mk" style="left:260px;top:342px;width:1px;height:14px"></div><div class="mk" style="left:979px;top:206px;width:1px;height:3px"></div><div class="mk" style="left:979px;top:219px;width:1px;height:3px"></div><div class="mk" style="left:979px;top:315px;width:1px;height:8px"></div><div class="mk" style="left:979px;top:337px;width:1px;height:20px"></div><div class="mk" style="left:979px;top:477px;width:1px;height:3px"></div><div class="mk" style="left:260px;top:104px;width:1px;height:5px"></div><div class="mk" style="left:979px;top:104px;width:1px;height:6px"></div>
<div class="a" style="left:1239px;top:0;width:1px;height:724px;background:#000"></div>
</body></html>
